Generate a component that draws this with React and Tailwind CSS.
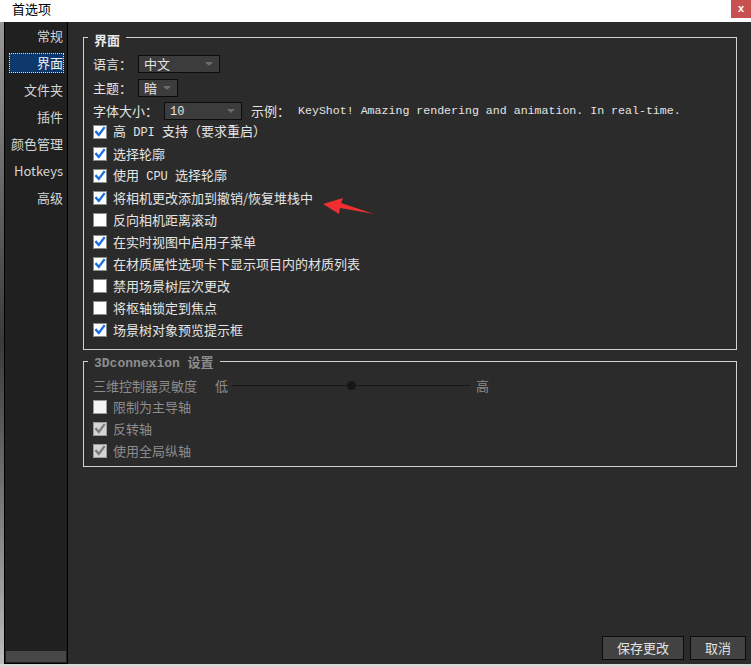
import React from "react";

const cjk = { fontFamily: '"Noto Sans CJK SC", "Liberation Sans", sans-serif' };
const mono = { fontFamily: '"Liberation Mono", "Noto Sans CJK SC", monospace' };

const navItems = ["常规", "界面", "文件夹", "插件", "颜色管理", "Hotkeys", "高级"];

const mainChecks = [
  ["高 DPI 支持（要求重启）", true],
  ["选择轮廓", true],
  ["使用 CPU 选择轮廓", true],
  ["将相机更改添加到撤销/恢复堆栈中", true],
  ["反向相机距离滚动", false],
  ["在实时视图中启用子菜单", true],
  ["在材质属性选项卡下显示项目内的材质列表", true],
  ["禁用场景树层次更改", false],
  ["将枢轴锁定到焦点", false],
  ["场景树对象预览提示框", true],
];

const Check = ({ checked, disabled }) => (
  <span
    className={
      "w-[14px] h-[14px] shrink-0 flex items-center justify-center border " +
      (disabled
        ? checked
          ? "bg-[#d4d4d4] border-[#9a9a9a]"
          : "bg-[#f4f4f4] border-[#9a9a9a]"
        : "bg-white border-[#8a8a8a]")
    }
  >
    {checked && (
      <svg viewBox="0 0 14 14" className="w-[14px] h-[14px]">
        <path
          d="M2.6 7 L5.6 10.4 L11.6 2.4"
          fill="none"
          stroke={disabled ? "#7c7c7c" : "#1a6fe0"}
          strokeWidth="2.8"
          strokeLinecap="square"
        />
      </svg>
    )}
  </span>
);

// KeyShot's combobox, no real select
const Combo = ({ value, width }) => (
  <div
    className={`${width} h-[18px] bg-[#3c3c3c] border border-[#0c0c0c] flex items-center justify-between pl-[5px] pr-[6px] text-[#e2e2e2]`}
  >
    <span>{value}</span>
    <span className="w-0 h-0 border-l-[4px] border-r-[4px] border-t-[4px] border-l-transparent border-r-transparent border-t-[#6c6c6c]" />
  </div>
);

// latin runs in the reference are monospace
const Label = ({ text }) =>
  text.split(/( ?[A-Z]{3} ?)/).map((part, i) =>
    /[A-Z]{3}/.test(part) ? (
      <span key={i} style={mono} className="text-[12px]">
        {part}
      </span>
    ) : (
      <span key={i}>{part}</span>
    )
  );

const Row = ({ label, checked, disabled }) => (
  <div className="h-[22px] flex items-center gap-[6px]">
    <Check checked={checked} disabled={disabled} />
    <span className={disabled ? "text-[#8d8d8d]" : "text-[#e4e4e4]"}>
      <Label text={label} />
    </span>
  </div>
);

export default function App() {
  return (
    <div className="relative w-[751px] h-[667px] flex flex-col bg-white overflow-hidden text-[13px] leading-[16px]" style={cjk}>
      {/* title bar */}
      <div className="h-[22px] shrink-0 flex items-start justify-between bg-white">
        <span className="pl-[12px] pt-[1px] text-[13px] text-black">首选项</span>
        <div className="w-[20px] h-[18px] bg-[#c75050] flex items-center justify-center text-white text-[11px] font-bold" style={mono}>
          x
        </div>
      </div>

      <div className="flex-1 flex min-h-0">
        {/* bit of the desktop behind the window */}
        <div className="w-[4px] shrink-0 bg-gradient-to-b from-[#9a9a9a] via-[#3a3a3a] to-[#bdbdbd]" />

        {/* sidebar */}
        <div className="w-[64px] shrink-0 flex flex-col bg-[#202020] border-l border-r border-b border-black">
          <div className="flex flex-col pr-[3px] pl-[4px]">
            {navItems.map((item) => (
              <div
                key={item}
                className={
                  "flex items-center justify-end pr-[1px] text-[13px] " +
                  (item === "界面"
                    ? "bg-[#0c386c] outline-1 outline-dotted outline-[#d8d8d8] -outline-offset-1 text-[#f2f2f2] h-[20px] my-[3.5px]"
                    : "h-[27px] text-[#d6d6d6]")
                }
              >
                {item}
              </div>
            ))}
          </div>
          <div className="flex-1" />
          <div className="h-[11px] mx-[1px] mb-[1px] bg-[#474747]" />
        </div>

        {/* content */}
        <div className="flex-1 flex flex-col bg-[#2b2b2b]">
          <div className="flex flex-col pl-[15px] pr-[14px] pt-[4px]">
            <fieldset className="border border-[#d2d2d2] pl-[9px] pr-[9px] pb-[8px]">
              <legend className="ml-[-5px] px-[6px] pt-[6px] text-[13px] font-bold text-[#e8e8e8]">界面</legend>
              <div className="flex flex-col pt-[3px] text-[#e4e4e4]">
                <div className="h-[25px] flex items-center">
                  <span className="w-[45px]">语言：</span>
                  <Combo value="中文" width="w-[82px]" />
                </div>
                <div className="h-[24px] flex items-center">
                  <span className="w-[45px]">主题：</span>
                  <Combo value="暗" width="w-[40px]" />
                </div>
                <div className="h-[21px] flex items-center">
                  <span className="w-[71px]">字体大小：</span>
                  <Combo value={<span style={mono} className="text-[12px]">10</span>} width="w-[78px]" />
                  <span className="ml-[9px]">示例：</span>
                  <span className="ml-[8px] text-[11.6px] text-[#e4e4e4]" style={mono}>
                    KeyShot! Amazing rendering and animation. In real-time.
                  </span>
                </div>
                {mainChecks.map(([label, on]) => (
                  <Row key={label} label={label} checked={on} />
                ))}
              </div>
            </fieldset>

            <fieldset className="border border-[#d2d2d2] pl-[9px] pr-[9px] pb-[4px]">
              <legend className="ml-[-5px] px-[6px] pt-[6px] text-[13px] font-bold text-[#8d8d8d]" style={mono}>
                3Dconnexion 设置
              </legend>
              <div className="flex flex-col pt-[3px] text-[#8d8d8d]">
                <div className="h-[21px] flex items-center">
                  <span>三维控制器灵敏度</span>
                  <span className="ml-[18px]">低</span>
                  <div className="ml-[4px] w-[238px] flex items-center">
                    <div className="flex-1 h-[1px] bg-[#161616]" />
                    <div className="w-[9px] h-[9px] rounded-full bg-[#161616]" />
                    <div className="flex-1 h-[1px] bg-[#161616]" />
                  </div>
                  <span className="ml-[6px]">高</span>
                </div>
                <Row label="限制为主导轴" checked={false} disabled />
                <Row label="反转轴" checked disabled />
                <Row label="使用全局纵轴" checked disabled />
              </div>
            </fieldset>
          </div>

          <div className="flex-1" />
          <div className="flex justify-end gap-[6px] pr-[5px] pb-[4px]">
            <button className="w-[82px] h-[24px] bg-[#424242] border border-[#0c0c0c] text-[#e2e2e2] text-[13px]">保存更改</button>
            <button className="w-[56px] h-[24px] bg-[#424242] border border-[#0c0c0c] text-[#e2e2e2] text-[13px]">取消</button>
          </div>
        </div>
      </div>
      <div className="h-[3px] shrink-0 bg-[#d8d8d8]" />

      {/* red annotation arrow */}
      <svg className="absolute left-[320px] top-[194px] w-[60px] h-[26px] pointer-events-none" viewBox="0 0 60 26">
        <polygon points="3,10 23,4 21,9 54,20 20,14 19,20" fill="#f03030" />
      </svg>
    </div>
  );
}
